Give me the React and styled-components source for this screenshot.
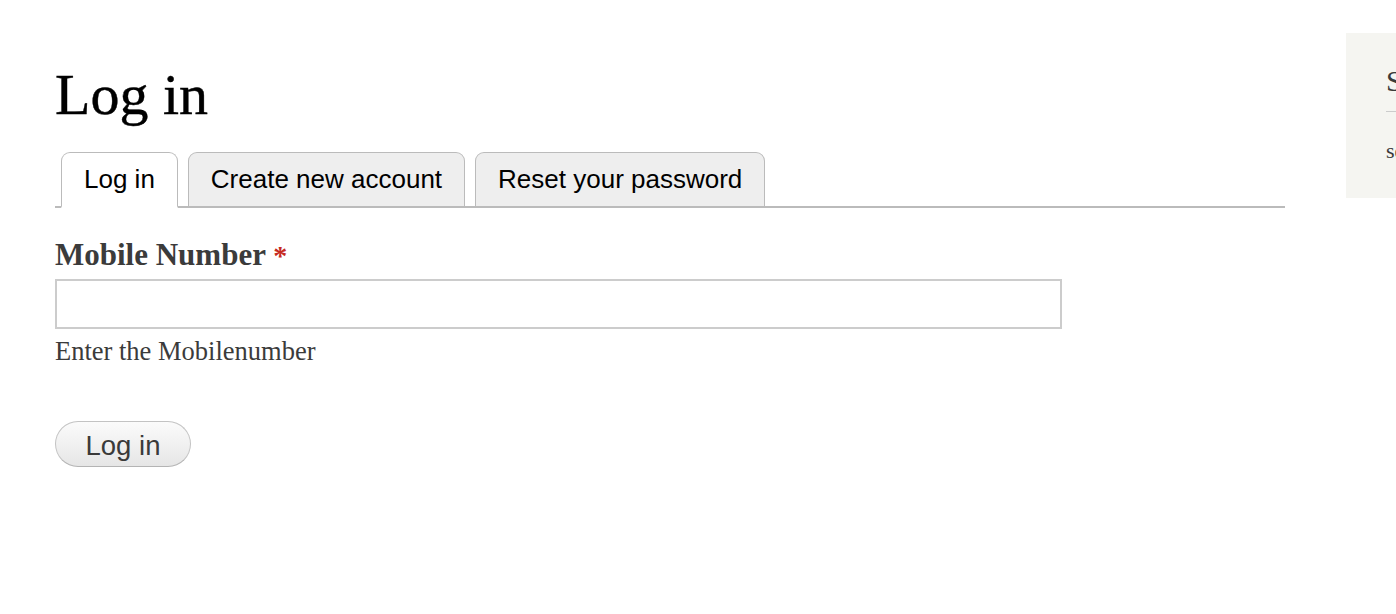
import React from "react";
import styled, { createGlobalStyle } from "styled-components";

const GlobalStyle = createGlobalStyle`
  html, body {
    margin: 0;
    padding: 0;
    background: #fff;
    overflow: hidden;
  }
  body {
    font-family: "Liberation Serif", Georgia, serif;
    color: #3b3b3b;
  }
`;

const tabs = [
  { label: "Log in", active: true },
  { label: "Create new account" },
  { label: "Reset your password" },
];

const App = () => {
  return (
    <>
      <GlobalStyle />
      <Page>
        <Main>
          <Title>Log in</Title>
          <TabList>
            {tabs.map((tab) => (
              <Tab key={tab.label} $active={tab.active}>
                {tab.label}
              </Tab>
            ))}
          </TabList>
          <Form>
            <Label htmlFor="mobile">
              Mobile Number <Required>*</Required>
            </Label>
            <Input id="mobile" type="text" />
            <Description>Enter the Mobilenumber</Description>
            <Button type="button">Log in</Button>
          </Form>
        </Main>
        <Sidebar>
          <BlockTitle>Search</BlockTitle>
          <BlockText>search</BlockText>
        </Sidebar>
      </Page>
    </>
  );
};

export default App;

const Page = styled.div`
  display: flex;
  align-items: flex-start;
  width: 100vw;
  height: 614px;
  overflow: hidden;
  padding-left: 55px;
  box-sizing: border-box;
`;

const Main = styled.div`
  width: 1230px;
  flex-shrink: 0;
  padding-top: 61px;
`;

const Title = styled.h1`
  margin: 0;
  font-family: "Liberation Serif", Georgia, serif;
  font-weight: normal;
  font-size: 58px;
  line-height: 68px;
  color: #000;
  -webkit-text-stroke: 0.4px #000;
`;

const TabList = styled.ul`
  display: flex;
  gap: 10px;
  margin: 23px 0 0;
  padding: 0 0 0 6px;
  list-style: none;
  border-bottom: 2px solid #bbb;
`;

const Tab = styled.li`
  height: 53px;
  margin-bottom: -2px;
  padding: 0 22px;
  display: flex;
  align-items: center;
  font-family: "Liberation Sans", Helvetica, Arial, sans-serif;
  font-size: 26px;
  color: #000;
  background: ${(p) => (p.$active ? "#fff" : "#eee")};
  border: 1.5px solid #bbb;
  border-bottom: 2px solid ${(p) => (p.$active ? "#fff" : "#bbb")};
  border-radius: 9px 9px 0 0;
`;

const Form = styled.form`
  display: flex;
  flex-direction: column;
  align-items: flex-start;
  padding-top: 29px;
`;

const Label = styled.label`
  font-family: "Liberation Serif", Georgia, serif;
  font-weight: bold;
  font-size: 31px;
  line-height: 35px;
  color: #3b3b3b;
`;

const Required = styled.span`
  color: #c62a21;
  font-size: 28px;
`;

const Input = styled.input`
  margin-top: 6px;
  width: 1007px;
  height: 50px;
  box-sizing: border-box;
  border: 2px solid #ccc;
  background: #fff;
  outline: none;
`;

const Description = styled.div`
  margin-top: 7px;
  font-size: 26.5px;
  line-height: 31px;
  color: #3b3b3b;
`;

const Button = styled.button`
  margin-top: 54px;
  width: 136px;
  height: 46px;
  box-sizing: border-box;
  border: 1.5px solid #c3c3c3;
  border-bottom-color: #b4b4b4;
  border-radius: 23px;
  background: linear-gradient(to bottom, #fbfbfb, #e6e6e6);
  font-family: "Liberation Sans", Helvetica, Arial, sans-serif;
  font-size: 27.5px;
  color: #3a3a3a;
  padding: 4px 0 0;
`;

const Sidebar = styled.aside`
  flex-shrink: 0;
  width: 300px;
  margin-top: 33px;
  margin-left: 61px;
  height: 165px;
  padding: 30px 40px 0;
  box-sizing: border-box;
  background: #f5f5f1;
`;

const BlockTitle = styled.h2`
  margin: 0;
  padding-bottom: 12px;
  border-bottom: 1.5px solid #ccc;
  font-weight: normal;
  font-size: 30px;
  line-height: 36px;
  color: #3b3b3b;
`;

const BlockText = styled.div`
  margin-top: 26px;
  font-size: 22px;
  color: #3b3b3b;
`;
